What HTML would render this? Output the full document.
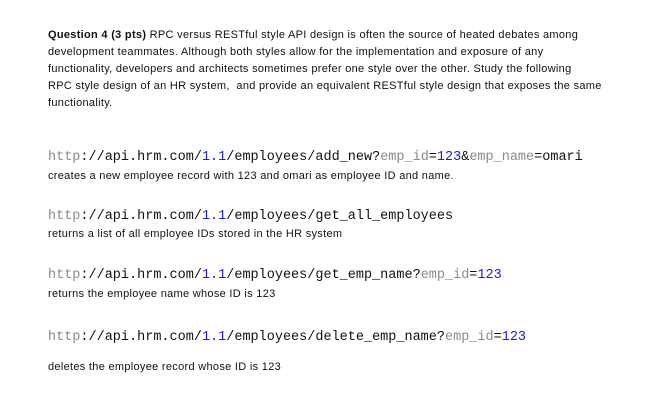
<!DOCTYPE html>
<html><head><style>
body{margin:0;width:647px;height:403px;background:#fff;position:relative;overflow:hidden}
.t{position:absolute;left:48px;font-family:"Liberation Sans",sans-serif;font-size:11px;letter-spacing:0.3px;color:#111;white-space:nowrap;line-height:17px}
.m{position:absolute;left:48px;font-family:"Liberation Mono",monospace;font-size:13.5px;color:#111;white-space:nowrap;line-height:16px}
.g{color:#8a8a8a}.b{color:#1a1ae0}
</style></head><body>
<div class="t" style="top:27px"><b>Question 4 (3 pts)</b> RPC versus RESTful style API design is often the source of heated debates among</div>
<div class="t" style="top:44px">development teammates. Although both styles allow for the implementation and exposure of any</div>
<div class="t" style="top:61px">functionality, developers and architects sometimes prefer one style over the other. Study the following</div>
<div class="t" style="top:78px">RPC style design of an HR system, &nbsp;and provide an equivalent RESTful style design that exposes the same</div>
<div class="t" style="top:95px">functionality.</div>

<div class="m" style="top:150px"><span class="g">http</span>://api.hrm.com/<span class="b">1.1</span>/employees/add_new?<span class="g">emp_id</span>=<span class="b">123</span>&amp;<span class="g">emp_name</span>=omari</div>
<div class="t" style="top:168px">creates a new employee record with 123 and omari as employee ID and name.</div>

<div class="m" style="top:209px"><span class="g">http</span>://api.hrm.com/<span class="b">1.1</span>/employees/get_all_employees</div>
<div class="t" style="top:226px">returns a list of all employee IDs stored in the HR system</div>

<div class="m" style="top:268px"><span class="g">http</span>://api.hrm.com/<span class="b">1.1</span>/employees/get_emp_name?<span class="g">emp_id</span>=<span class="b">123</span></div>
<div class="t" style="top:286px">returns the employee name whose ID is 123</div>

<div class="m" style="top:330px"><span class="g">http</span>://api.hrm.com/<span class="b">1.1</span>/employees/delete_emp_name?<span class="g">emp_id</span>=<span class="b">123</span></div>
<div class="t" style="top:359px">deletes the employee record whose ID is 123</div>
</body></html>
